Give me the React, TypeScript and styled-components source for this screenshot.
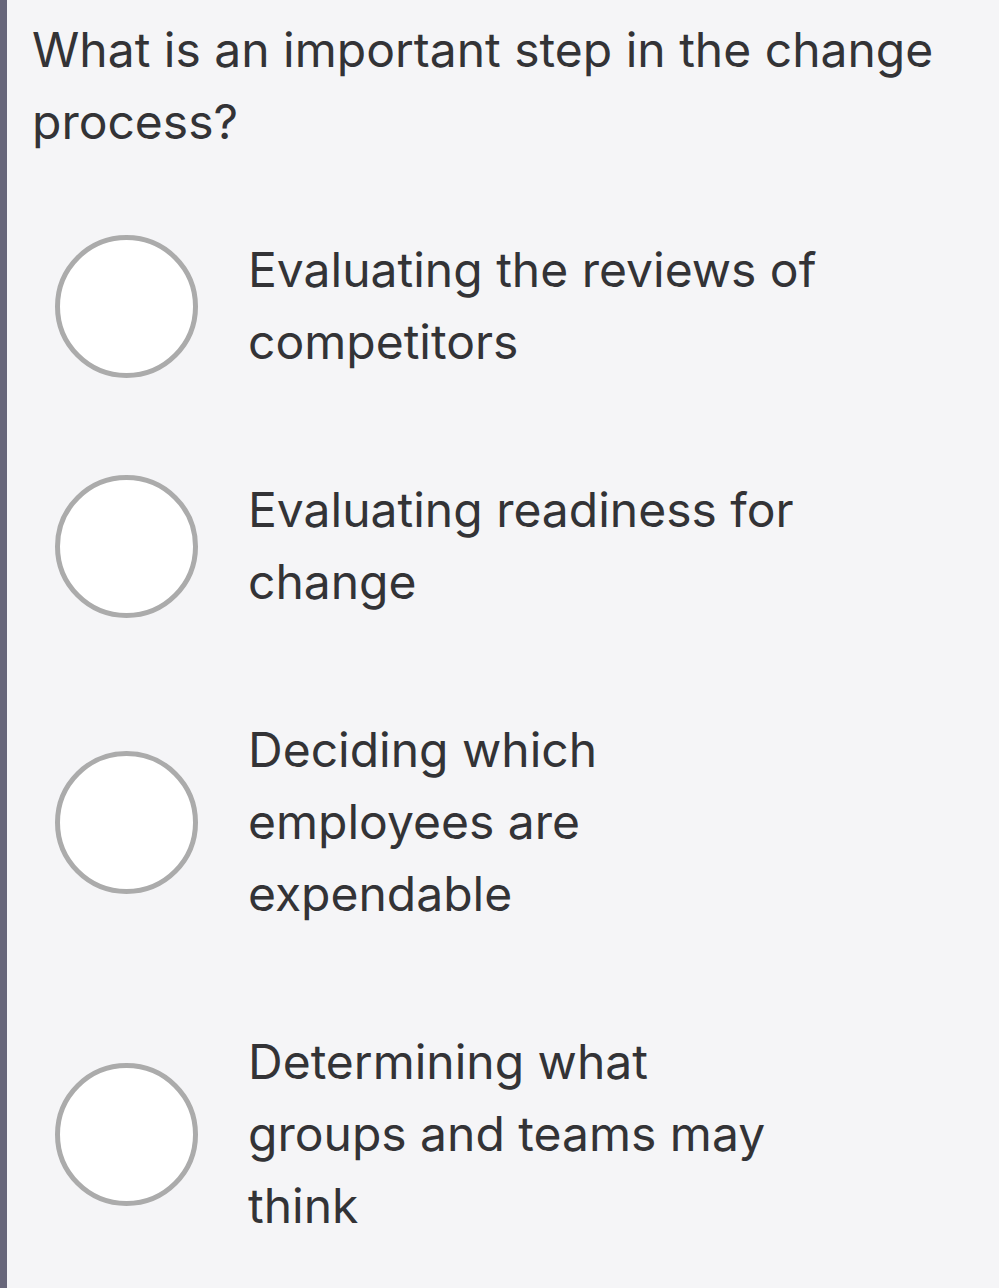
import React from 'react';
import styled, { createGlobalStyle } from 'styled-components';

interface Choice {
    id: number;
    lines: string[];
}

const choices: Choice[] = [
    { id: 1, lines: ['Evaluating the reviews of', 'competitors'] },
    { id: 2, lines: ['Evaluating readiness for', 'change'] },
    { id: 3, lines: ['Deciding which', 'employees are', 'expendable'] },
    { id: 4, lines: ['Determining what', 'groups and teams may', 'think'] },
];

function App() {
    return (
        <>
            <GlobalStyle />
            <Page>
                <Question>
                    <Line>What is an important step in the change</Line>
                    <Line>process?</Line>
                </Question>
                <ChoiceList>
                    {choices.map(choice => (
                        <ChoiceRow key={choice.id}>
                            <Radio />
                            <ChoiceText>
                                {choice.lines.map((line, i) => (
                                    <Line key={i}>{line}</Line>
                                ))}
                            </ChoiceText>
                        </ChoiceRow>
                    ))}
                </ChoiceList>
            </Page>
        </>
    );
}

export default App;

const GlobalStyle = createGlobalStyle`
    html, body {
        margin: 0;
        padding: 0;
        background: #f5f5f7;
    }
`;

const Page = styled.div`
    box-sizing: border-box;
    width: 999px;
    height: 1288px;
    overflow: hidden;
    border-left: 7px solid #67667a;
    background: #f5f5f7;
    padding: 14px 0 0 25px;
    font-family: Inter, 'Noto Sans', sans-serif;
    color: #333336;
`;

const Question = styled.div`
    font-size: 48px;
    line-height: 72px;
`;

const Line = styled.div`
    white-space: nowrap;
`;

const ChoiceList = styled.div`
    margin-top: 76px;
    display: flex;
    flex-direction: column;
    gap: 96px;
    padding-left: 23px;
`;

const ChoiceRow = styled.div`
    display: flex;
    align-items: center;
    gap: 50px;
`;

const Radio = styled.div`
    box-sizing: border-box;
    flex: none;
    width: 143px;
    height: 143px;
    border-radius: 50%;
    border: 5px solid #ababab;
    background: #ffffff;
`;

const ChoiceText = styled.div`
    font-size: 48px;
    line-height: 72px;
`;
